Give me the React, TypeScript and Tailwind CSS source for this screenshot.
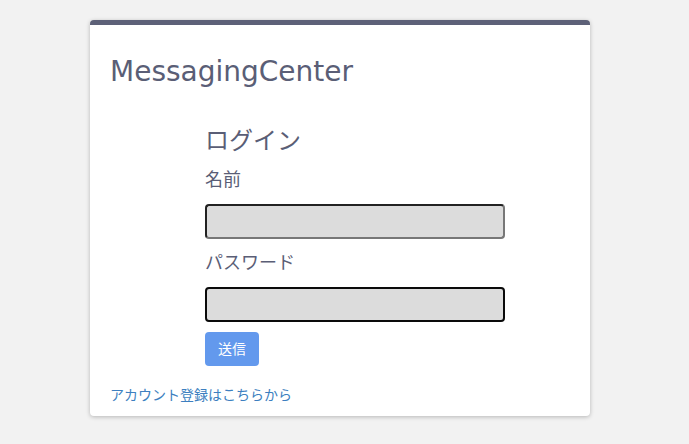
export default function App() {
  return (
    <div
      className="min-h-screen bg-[#f2f2f2] pt-[20px]"
      style={{ fontFamily: '"DejaVu Sans", "Noto Sans CJK JP", sans-serif' }}
    >
      <div className="ml-[90px] w-[500px] h-[396px] bg-white rounded-[4px] border-t-[5px] border-[#5d6178] shadow-[0_1px_4px_rgba(0,0,0,0.25)] px-[20px] pt-[27px]">
        <h1 className="text-[28px] leading-[40px] text-[#5a5e76]">MessagingCenter</h1>
        <form className="ml-[95px] w-[300px] mt-[33px]" onSubmit={(e) => e.preventDefault()}>
          <h2 className="text-[24px] leading-[32px] text-[#5a5e76]">ログイン</h2>
          <label className="block mt-[10px] text-[18px] leading-[26px] text-[#5a5e76]">名前</label>
          <input
            type="text"
            className="block mt-[11px] w-[300px] h-[35px] bg-[#dcdcdc] rounded-[4px] border-2 border-t-[#222] border-l-[#222] border-r-[#777] border-b-[#777] outline-none"
          />
          <label className="block mt-[11px] text-[18px] leading-[26px] text-[#5a5e76]">パスワード</label>
          <input
            type="password"
            className="block mt-[11px] w-[300px] h-[35px] bg-[#dcdcdc] rounded-[4px] border-2 border-[#0a0a0a] outline-none"
          />
          <button
            type="submit"
            className="block mt-[10px] w-[54px] h-[34px] bg-[#6399ed] rounded-[4px] text-white text-[14px]"
          >
            送信
          </button>
        </form>
        <a href="#" className="block mt-[19px] text-[14px] leading-[20px] text-[#3d7fc0]">
          アカウント登録はこちらから
        </a>
      </div>
    </div>
  );
}
